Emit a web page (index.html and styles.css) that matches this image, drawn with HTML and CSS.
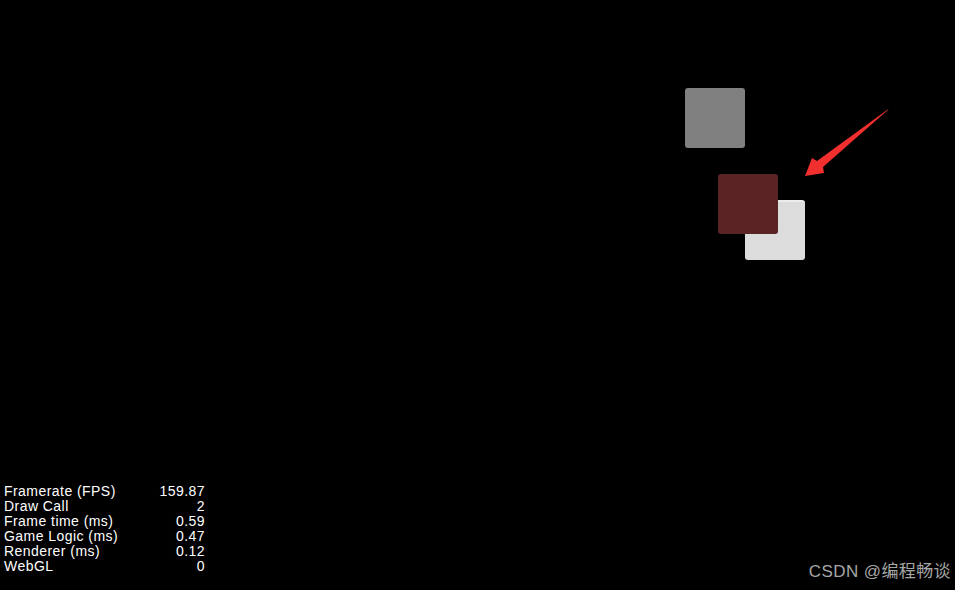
FILE: index.html
```html
<!DOCTYPE html>
<html>
<head>
<meta charset="utf-8">
<link rel="stylesheet" href="styles.css">
</head>
<body>
<div class="scene">
  <div class="sq sq-gray"></div>
  <div class="sq sq-light"></div>
  <div class="sq sq-red"></div>
  <svg class="arrow" width="955" height="590" viewBox="0 0 955 590">
    <polygon points="889,109 823,167 824,173 805,176 812,158 817,161 887,110" fill="#f22f2f"/>
  </svg>
  <table class="stats">
    <tr><td>Framerate (FPS)</td><td class="v">159.87</td></tr>
    <tr><td>Draw Call</td><td class="v">2</td></tr>
    <tr><td>Frame time (ms)</td><td class="v">0.59</td></tr>
    <tr><td>Game Logic (ms)</td><td class="v">0.47</td></tr>
    <tr><td>Renderer (ms)</td><td class="v">0.12</td></tr>
    <tr><td>WebGL</td><td class="v">0</td></tr>
  </table>
  <div class="mark">CSDN @编程畅谈</div>
</div>
</body>
</html>
```
FILE: styles.css
```css
html, body {
  margin: 0;
  padding: 0;
  background: #000;
  width: 955px;
  height: 590px;
  overflow: hidden;
}
.scene {
  position: relative;
  width: 955px;
  height: 590px;
  background: #000;
}
.sq {
  position: absolute;
  width: 60px;
  height: 60px;
  border-radius: 3px;
}
.sq-gray { left: 685px; top: 88px; background: #808080; }
.sq-light {
  left: 745px; top: 200px; background: #dcdcdc;
  border-top: 2px solid #ececec;
  height: 58px;
}
.sq-red { left: 718px; top: 174px; background: #5a2424; }
.arrow {
  position: absolute;
  left: 0;
  top: 0;
}
.stats {
  position: absolute;
  left: 4px;
  top: 484px;
  width: 201px;
  border-collapse: collapse;
  font-family: "Liberation Sans", Arial, sans-serif;
  font-size: 14px;
  letter-spacing: 0.45px;
  line-height: 15px;
  color: #fff;
}
.stats td {
  padding: 0;
  white-space: nowrap;
}
.stats td.v { text-align: right; }
.mark {
  position: absolute;
  right: 4px;
  top: 560px;
  font-family: "Liberation Sans", "Noto Sans CJK SC", sans-serif;
  font-size: 17px;
  letter-spacing: 0.4px;
  line-height: 24px;
  color: #a6a6a6;
}
```
